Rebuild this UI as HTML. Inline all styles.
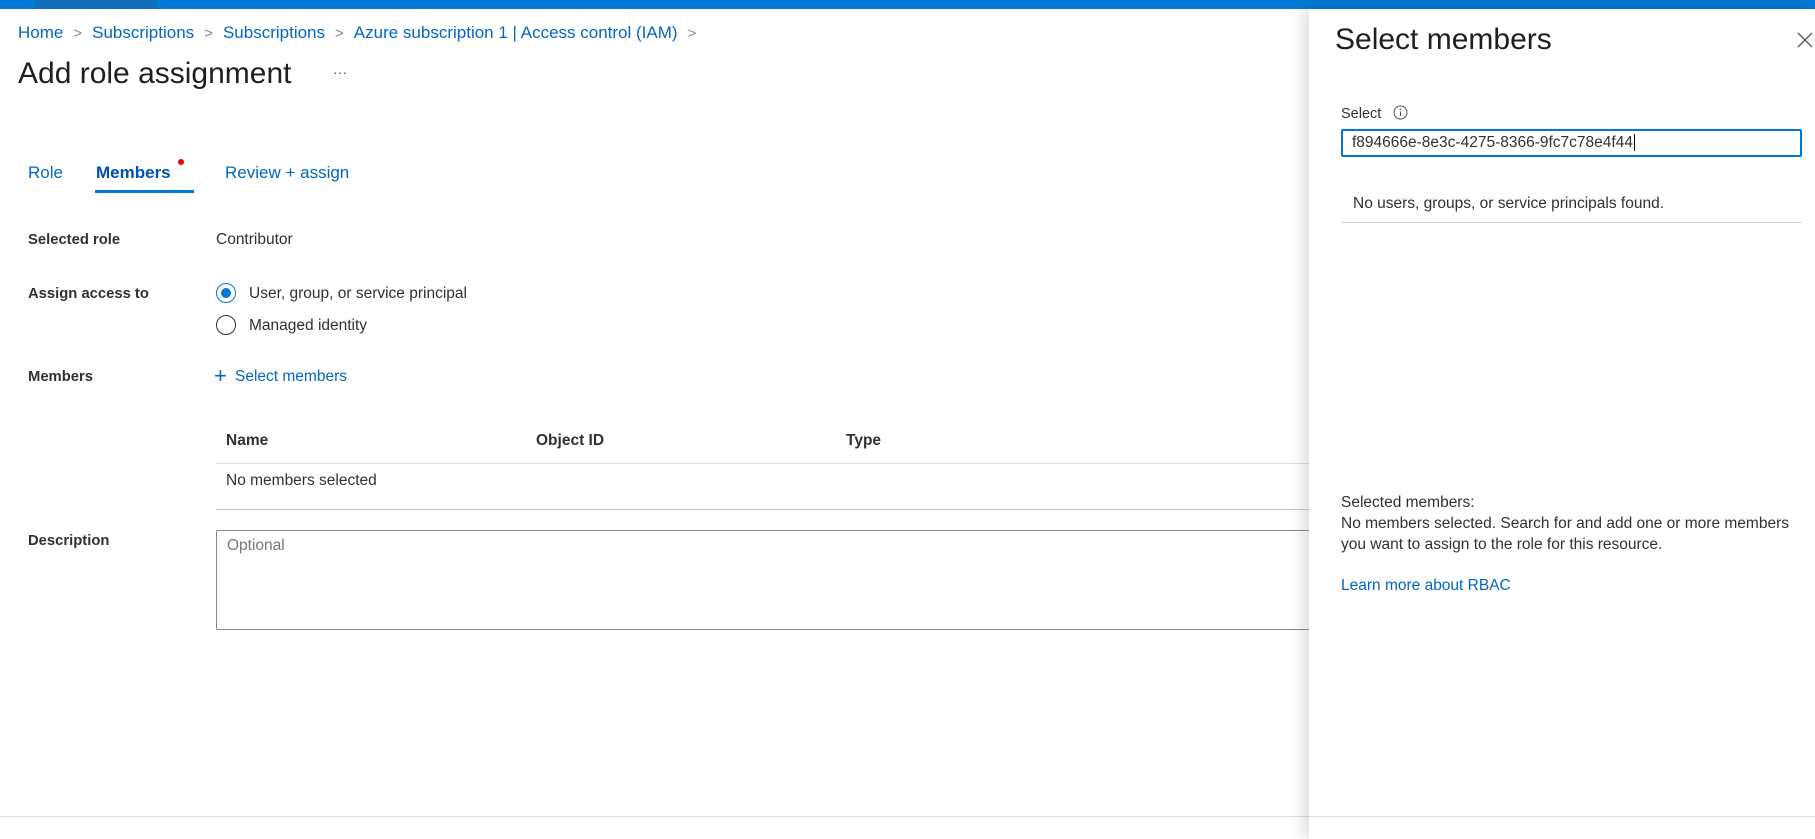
<!DOCTYPE html>
<html><head><meta charset="utf-8">
<style>
*{margin:0;padding:0;box-sizing:border-box}
body{width:1815px;height:839px;position:relative;overflow:hidden;background:#fff;font-family:"Liberation Sans",sans-serif;color:#323130}
.a{position:absolute;white-space:nowrap}
.blue{color:#0067c0}
.lbl{font-weight:bold;font-size:14.8px;color:#323130}
.t{font-size:15.5px}
.ch{color:#888;margin:0 10px;font-size:15px}
</style></head><body>
<div class="a" style="left:0;top:0;width:1815px;height:9px;background:#0078d4"></div>
<div class="a" style="left:35px;top:0;width:122px;height:9px;background:#106ebe"></div>

<div class="a blue" style="left:18px;top:23px;font-size:17px">Home<span class="ch">&gt;</span>Subscriptions<span class="ch">&gt;</span>Subscriptions<span class="ch">&gt;</span>Azure subscription 1 | Access control (IAM)<span class="ch">&gt;</span></div>
<div class="a" style="left:18px;top:57px;font-size:30px;color:#201f1e">Add role assignment</div>
<div class="a" style="left:333px;top:64px;font-size:14px;color:#555">···</div>

<div class="a blue" style="left:28px;top:163px;font-size:17px">Role</div>
<div class="a" style="left:96px;top:163px;font-size:17px;color:#0050b0;font-weight:bold">Members</div>
<div class="a" style="left:178px;top:159px;width:6px;height:6px;border-radius:50%;background:#e00"></div>
<div class="a" style="left:95px;top:190px;width:99px;height:3px;background:#0078d4"></div>
<div class="a blue" style="left:225px;top:163px;font-size:17px">Review + assign</div>

<div class="a lbl" style="left:28px;top:232px">Selected role</div>
<div class="a t" style="left:216px;top:231px">Contributor</div>
<div class="a lbl" style="left:28px;top:286px">Assign access to</div>
<div class="a" style="left:216px;top:283px;width:20px;height:20px;border-radius:50%;border:1.5px solid #0078d4"></div>
<div class="a" style="left:221px;top:288px;width:10px;height:10px;border-radius:50%;background:#0078d4"></div>
<div class="a t" style="left:249px;top:285px">User, group, or service principal</div>
<div class="a" style="left:216px;top:315px;width:20px;height:20px;border-radius:50%;border:1.5px solid #333"></div>
<div class="a t" style="left:249px;top:317px">Managed identity</div>
<div class="a lbl" style="left:28px;top:369px">Members</div>
<div class="a blue" style="left:214px;top:363px;font-size:22px;font-weight:300">+</div>
<div class="a blue t" style="left:235px;top:368px">Select members</div>

<div class="a t" style="left:226px;top:432px;font-weight:bold">Name</div>
<div class="a t" style="left:536px;top:432px;font-weight:bold">Object ID</div>
<div class="a t" style="left:846px;top:432px;font-weight:bold">Type</div>
<div class="a" style="left:216px;top:463px;width:1100px;height:1px;background:#e1dfdd"></div>
<div class="a t" style="left:226px;top:472px">No members selected</div>
<div class="a" style="left:216px;top:509px;width:1100px;height:1px;background:#c8c6c4"></div>
<div class="a lbl" style="left:28px;top:533px">Description</div>
<div class="a" style="left:216px;top:530px;width:1100px;height:100px;border:1px solid #8a8886;border-radius:2px"></div>
<div class="a t" style="left:227px;top:537px;color:#777">Optional</div>
<div class="a" style="left:0;top:816px;width:1815px;height:1px;background:#e1dfdd"></div>

<div class="a" style="left:1309px;top:9px;width:506px;height:830px;background:#fff;box-shadow:-6px 0 14px rgba(0,0,0,0.13)"></div>
<div class="a" style="left:1309px;top:816px;width:506px;height:1px;background:#e1dfdd"></div>
<div class="a" style="left:1335px;top:23px;font-size:30px;color:#201f1e">Select members</div>
<svg class="a" style="left:1797px;top:32px" width="16" height="16"><path d="M1 1L15 15M15 1L1 15" stroke="#555" stroke-width="1.3"/></svg>
<div class="a" style="left:1341px;top:106px;font-size:14.5px">Select</div>
<svg class="a" style="left:1393px;top:105px" width="15" height="15"><circle cx="7.5" cy="7.5" r="6.5" fill="none" stroke="#555"/><path d="M7.5 6.5V11" stroke="#555"/><circle cx="7.5" cy="4.3" r=".8" fill="#555"/></svg>
<div class="a" style="left:1341px;top:129px;width:461px;height:28px;border:2px solid #0078d4;border-radius:2px"></div>
<div class="a t" style="left:1352px;top:134px">f894666e-8e3c-4275-8366-9fc7c78e4f44<span style="border-left:1px solid #000;margin-left:1px"></span></div>
<div class="a t" style="left:1353px;top:195px">No users, groups, or service principals found.</div>
<div class="a" style="left:1341px;top:222px;width:461px;height:1px;background:#d0d0d0"></div>
<div class="a t" style="left:1341px;top:492px;line-height:21px">Selected members:<br>No members selected. Search for and add one or more members<br>you want to assign to the role for this resource.</div>
<div class="a blue t" style="left:1341px;top:577px">Learn more about RBAC</div>
</body></html>
